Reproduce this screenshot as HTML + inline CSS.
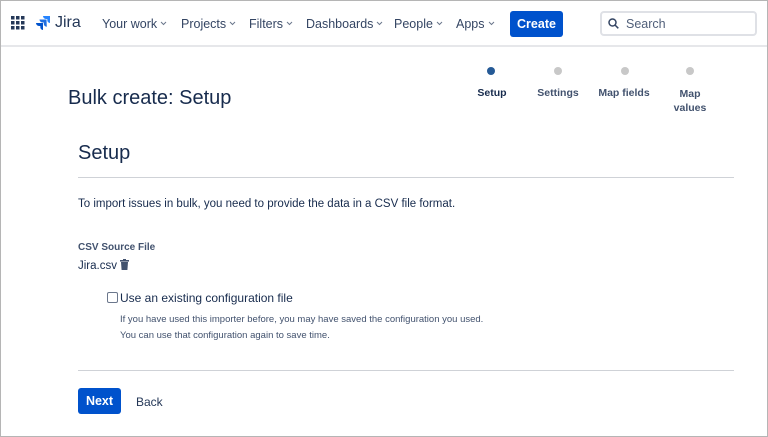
<!DOCTYPE html>
<html><head><style>
*{margin:0;padding:0;box-sizing:border-box}
body{width:768px;height:437px;overflow:hidden;background:#fff;font-family:"Liberation Sans",sans-serif;color:#172b4d;position:relative}
.frame{position:absolute;left:0;top:0;width:768px;height:437px;border:1px solid #b5b5b5;pointer-events:none}
.hdr{position:absolute;left:0;top:0;width:768px;height:47px;border-bottom:2px solid #e6e7ea}
.a{position:absolute;white-space:nowrap}
.nav{font-size:12.5px;color:#344563;top:17px}
.nav svg{margin-left:3px;vertical-align:2px}
.dot{position:absolute;width:8px;height:8px;border-radius:50%;background:#c8c8c8;top:67px}
.sl{font-size:10.5px;font-weight:bold;color:#42526e;top:87px;text-align:center;width:70px}
.line{position:absolute;left:78px;width:656px;height:1px;background:#cfd2d7}
</style></head><body>
<div class="hdr"></div>
<svg class="a" style="left:11px;top:16px" width="14" height="14" viewBox="0 0 14 14" fill="#253858">
<rect x="0" y="0" width="3.5" height="3.5"/><rect x="5" y="0" width="3.5" height="3.5"/><rect x="10" y="0" width="3.5" height="3.5"/>
<rect x="0" y="5" width="3.5" height="3.5"/><rect x="5" y="5" width="3.5" height="3.5"/><rect x="10" y="5" width="3.5" height="3.5"/>
<rect x="0" y="10" width="3.5" height="3.5"/><rect x="5" y="10" width="3.5" height="3.5"/><rect x="10" y="10" width="3.5" height="3.5"/></svg>
<svg class="a" style="left:35px;top:15px" width="16" height="16" viewBox="0 0 16 16"><path d="M15 1H8a3 3 0 0 0 3 3h1.3v1.3A3 3 0 0 0 15 8z" fill="#2684ff"/><path d="M11.5 4.5h-7a3 3 0 0 0 3 3h1.3v1.3a3 3 0 0 0 3 3z" fill="#1f6fe0"/><path d="M8 8H1a3 3 0 0 0 3 3h1.3v1.3A3 3 0 0 0 8 15z" fill="#0052cc"/></svg>
<div class="a" style="left:55px;top:14px;font-size:16px;color:#253858">Jira</div>
<div class="a nav" style="left:102px">Your work<svg width="7" height="5" viewBox="0 0 7 5"><path d="M1 1l2.5 2.5L6 1" fill="none" stroke="#6b778c" stroke-width="1"/></svg></div>
<div class="a nav" style="left:181px">Projects<svg width="7" height="5" viewBox="0 0 7 5"><path d="M1 1l2.5 2.5L6 1" fill="none" stroke="#6b778c" stroke-width="1"/></svg></div>
<div class="a nav" style="left:249px">Filters<svg width="7" height="5" viewBox="0 0 7 5"><path d="M1 1l2.5 2.5L6 1" fill="none" stroke="#6b778c" stroke-width="1"/></svg></div>
<div class="a nav" style="left:306px">Dashboards<svg width="7" height="5" viewBox="0 0 7 5"><path d="M1 1l2.5 2.5L6 1" fill="none" stroke="#6b778c" stroke-width="1"/></svg></div>
<div class="a nav" style="left:394px">People<svg width="7" height="5" viewBox="0 0 7 5"><path d="M1 1l2.5 2.5L6 1" fill="none" stroke="#6b778c" stroke-width="1"/></svg></div>
<div class="a nav" style="left:456px">Apps<svg width="7" height="5" viewBox="0 0 7 5"><path d="M1 1l2.5 2.5L6 1" fill="none" stroke="#6b778c" stroke-width="1"/></svg></div>
<div class="a" style="left:510px;top:11px;width:53px;height:26px;background:#0052cc;border-radius:3px;color:#fff;font-size:12.5px;font-weight:bold;text-align:center;line-height:26px">Create</div>
<div class="a" style="left:600px;top:11px;width:157px;height:25px;border:2px solid #dfe1e6;border-radius:4px"></div>
<svg class="a" style="left:608px;top:18px" width="11" height="11" viewBox="0 0 11 11" fill="none" stroke="#344563" stroke-width="1.5"><circle cx="4.5" cy="4.5" r="3.5"/><path d="M7 7l3.3 3.3"/></svg>
<div class="a" style="left:626px;top:17px;font-size:12.5px;color:#505f79">Search</div>

<div class="a" style="left:68px;top:87px;font-size:20px;color:#172b4d">Bulk create: Setup</div>
<div class="dot" style="left:487px;background:#255a96"></div>
<div class="dot" style="left:554px"></div>
<div class="dot" style="left:621px"></div>
<div class="dot" style="left:686px"></div>
<div class="a sl" style="left:457px;color:#172b4d">Setup</div>
<div class="a sl" style="left:523px">Settings</div>
<div class="a sl" style="left:589px">Map fields</div>
<div class="a sl" style="left:655px;line-height:14px">Map<br>values</div>

<div class="a" style="left:78px;top:142px;font-size:20px;color:#172b4d">Setup</div>
<div class="line" style="top:177px"></div>
<div class="a" style="left:78px;top:198px;font-size:11.5px">To import issues in bulk, you need to provide the data in a CSV file format.</div>
<div class="a" style="left:78px;top:242px;font-size:10px;font-weight:bold;color:#42526e">CSV Source File</div>
<div class="a" style="left:78px;top:260px;font-size:11.5px">Jira.csv</div>
<svg class="a" style="left:120px;top:259px" width="9" height="11" viewBox="0 0 9 11" fill="#42526e"><rect x="0" y="1" width="9" height="1.6"/><rect x="3" y="0" width="3" height="1.5"/><path d="M1 3h7l-.6 8H1.6z"/></svg>
<div class="a" style="left:107px;top:292px;width:11px;height:11px;border:1px solid #6b778c;border-radius:2px"></div>
<div class="a" style="left:120px;top:291px;font-size:12px">Use an existing configuration file</div>
<div class="a" style="left:120px;top:314px;font-size:9.5px;color:#42526e">If you have used this importer before, you may have saved the configuration you used.</div>
<div class="a" style="left:120px;top:330px;font-size:9.5px;color:#42526e">You can use that configuration again to save time.</div>
<div class="line" style="top:370px"></div>
<div class="a" style="left:78px;top:388px;width:43px;height:26px;background:#0052cc;border-radius:3px;color:#fff;font-size:12.5px;font-weight:bold;text-align:center;line-height:26px">Next</div>
<div class="a" style="left:136px;top:395px;font-size:12px;color:#253858">Back</div>
<div class="frame"></div>
</body></html>
